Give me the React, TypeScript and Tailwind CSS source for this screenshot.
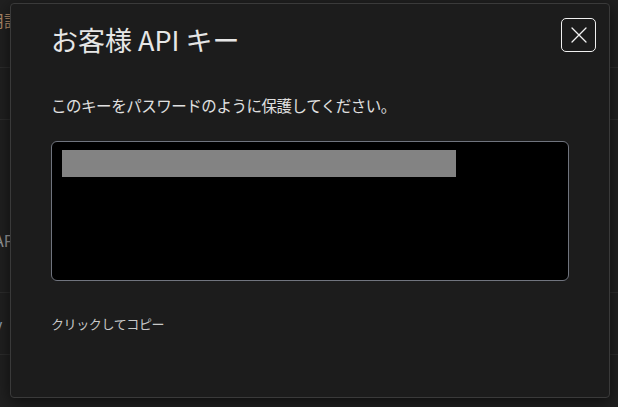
import React from "react";

const font = { fontFamily: '"Segoe UI", "Noto Sans CJK JP", "Noto Sans", sans-serif' };

function Background() {
    return (
        <div className="h-[407px] w-[618px] bg-[#202020] flex flex-col text-[#9a9a9a]" style={font}>
            <div className="h-[68px] border-b border-[#2c2c2c] flex items-start pt-[8px]">
                <span className="text-[16px] text-[#b08b6a] -ml-[12px]">用語集</span>
            </div>
            <div className="h-[52px] border-b border-[#2c2c2c]" />
            <div className="h-[173px] border-b border-[#2c2c2c] flex items-end pb-[40px]">
                <span className="text-[16px] -ml-[6px]">AP</span>
            </div>
            <div className="h-[62px] border-b border-[#2c2c2c] flex items-center">
                <span className="text-[16px] text-[#8a9ab0] -ml-[6px]">y</span>
            </div>
            <div className="flex-1" />
        </div>
    );
}

function CloseIcon() {
    return (
        <svg width="18" height="18" viewBox="0 0 18 18" fill="none">
            <path d="M2 2L16 16M16 2L2 16" stroke="#f2f2f2" strokeWidth="1.3" strokeLinecap="round" />
        </svg>
    );
}

export default function App() {
    return (
        <div className="relative w-[618px] h-[407px] overflow-hidden">
            <Background />
            <div
                className="absolute left-[10px] top-[3px] w-[600px] h-[395px] bg-[#1c1c1c] border border-[#3a3a3a] rounded-[4px] shadow-[0_4px_16px_rgba(0,0,0,0.6)] flex flex-col pl-[40px] pr-[40px]"
                style={font}
            >
                <div className="flex items-start justify-between pt-[19px]">
                    <h1 className="text-[27px] leading-[34px] text-[#e6e6e6] font-normal">お客様 API キー</h1>
                    <button className="-mr-[27px] -mt-[5px] w-[35px] h-[34px] rounded-[5px] border-[1.5px] border-[#f0f0f0] flex items-center justify-center">
                        <CloseIcon />
                    </button>
                </div>
                <p className="mt-[37px] text-[15.5px] leading-[22px] text-[#e0e0e0] tracking-[-0.03em]">このキーをパスワードのように保護してください。</p>
                <div className="mt-[25px] w-[518px] h-[140px] bg-black border border-[#70747e] rounded-[6px] pl-[10px] pt-[8px]">
                    <div className="w-[394px] h-[27px] bg-[#838383]" />
                </div>
                <div className="mt-[33px] text-[13px] leading-[20px] text-[#c8c8c8] tracking-[-0.03em]">クリックしてコピー</div>
            </div>
        </div>
    );
}
